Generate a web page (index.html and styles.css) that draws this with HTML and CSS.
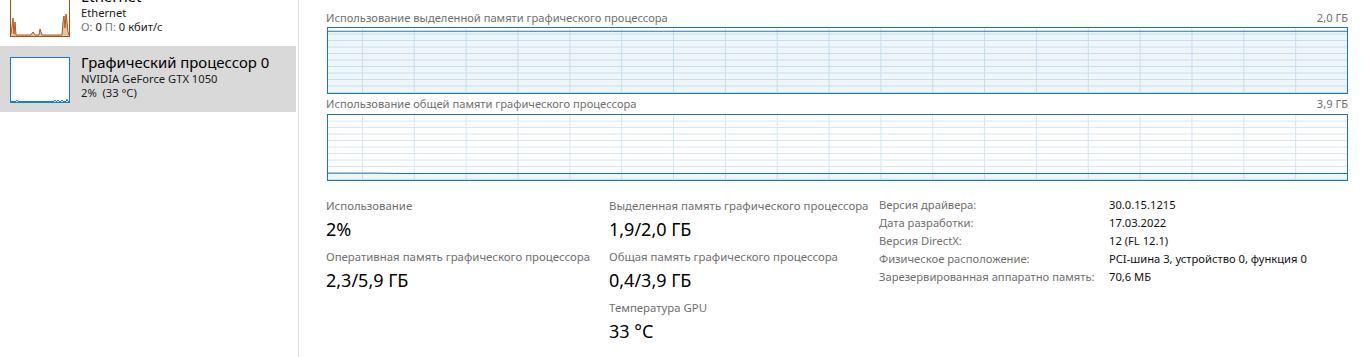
FILE: index.html
```html
<!DOCTYPE html>
<html lang="ru">
<head>
    <meta charset="UTF-8">
    <title>Диспетчер задач - Производительность</title>
    <link rel="stylesheet" href="styles.css">
</head>
<body>
<div class="app">

    <aside class="sidebar">
        <ul class="perf-list">
            <li class="perf-item">
                <div class="thumb thumb-net">
                    <svg viewBox="0 0 58 44" preserveAspectRatio="none">
                        <polygon class="net-fill" points="0,44 0,42 2,26 3,42 4,30 5,43 20,43 22,40 24,43 28,43 29,37 31,43 51,43 52,30 53,24 54,36 55,22 56,30 57,40 58,43 58,44"/>
                        <polyline class="net-line" points="0,42 2,26 3,42 4,30 5,43 20,43 22,40 24,43 28,43 29,37 31,43 51,43 52,30 53,24 54,36 55,22 56,30 57,40 58,43"/>
                    </svg>
                </div>
                <div class="perf-info">
                    <div class="perf-title">Ethernet</div>
                    <div class="perf-sub">Ethernet</div>
                    <div class="perf-stat"><span class="muted">О:</span> 0 <span class="muted">П:</span> 0 кбит/с</div>
                </div>
            </li>
            <li class="perf-item selected">
                <div class="thumb thumb-gpu">
                    <svg viewBox="0 0 58 44" preserveAspectRatio="none">
                        <polyline class="gpu-line" points="0,43.5 5,43.5 6,42 7,43.5 43,43.5 44,42 45,43.5 46,43.5 47,42 48,43.5 50,43.5 51,42 52,43.5 55,43.5 56,41.5 57,43.5 58,43.5"/>
                    </svg>
                </div>
                <div class="perf-info">
                    <div class="perf-title">Графический процессор 0</div>
                    <div class="perf-sub">NVIDIA GeForce GTX 1050</div>
                    <div class="perf-stat">2%&nbsp; (33 °C)</div>
                </div>
            </li>
        </ul>
    </aside>

    <main class="main">
        <div class="graph-head">
            <span>Использование выделенной памяти графического процессора</span>
            <span>2,0 ГБ</span>
        </div>
        <div class="graph">
            <svg class="graph-data" viewBox="0 0 100 100" preserveAspectRatio="none">
                <polygon class="data-fill" points="0,100 0,5 100,5 100,100"/>
                <polyline class="data-line" points="0,5 100,5"/>
            </svg>
        </div>

        <div class="graph-head second">
            <span>Использование общей памяти графического процессора</span>
            <span>3,9 ГБ</span>
        </div>
        <div class="graph">
            <svg class="graph-data" viewBox="0 0 100 100" preserveAspectRatio="none">
                <polygon class="data-fill" points="0,100 0,89.5 5,89.5 6.5,90 100,90 100,100"/>
                <polyline class="data-line" points="0,89.5 5,89.5 6.5,90 100,90"/>
            </svg>
        </div>

        <div class="stats">
            <div class="stat-col">
                <div class="stat-label">Использование</div>
                <div class="stat-value">2%</div>
                <div class="stat-label">Оперативная память графического процессора</div>
                <div class="stat-value">2,3/5,9 ГБ</div>
            </div>
            <div class="stat-col">
                <div class="stat-label">Выделенная память графического процессора</div>
                <div class="stat-value">1,9/2,0 ГБ</div>
                <div class="stat-label">Общая память графического процессора</div>
                <div class="stat-value">0,4/3,9 ГБ</div>
                <div class="stat-label">Температура GPU</div>
                <div class="stat-value">33 °C</div>
            </div>
            <dl class="props">
                <dt>Версия драйвера:</dt>
                <dd>30.0.15.1215</dd>
                <dt>Дата разработки:</dt>
                <dd>17.03.2022</dd>
                <dt>Версия DirectX:</dt>
                <dd>12 (FL 12.1)</dd>
                <dt>Физическое расположение:</dt>
                <dd>PCI-шина 3, устройство 0, функция 0</dd>
                <dt>Зарезервированная аппаратно память:</dt>
                <dd>70,6 МБ</dd>
            </dl>
        </div>
    </main>

</div>
</body>
</html>
```

FILE: styles.css
```css
* {
    box-sizing: border-box;
}
body {
    margin: 0;
    font-family: "Noto Sans", "Segoe UI", sans-serif;
    background-color: #ffffff;
    color: #000000;
    overflow: hidden;
}
.app {
    display: flex;
    height: 357px;
}

/* left list */
.sidebar {
    width: 299px;
    flex: none;
    border-right: 1px solid #e1e1e1;
    overflow: hidden;
}
.perf-list {
    list-style: none;
    margin: -20px 0 0;
    padding: 0;
}
.perf-item {
    display: flex;
    gap: 11px;
    width: 296px;
    height: 66px;
    padding: 10px;
}
.perf-item.selected {
    background-color: #d9d9d9;
}
.thumb {
    width: 60px;
    height: 46px;
    flex: none;
    margin-top: 1px;
    border: 1px solid;
    background-color: #ffffff;
}
.thumb svg {
    display: block;
    width: 100%;
    height: 100%;
}
.thumb-net {
    border-color: #a7520f;
}
.net-fill {
    fill: rgba(167, 82, 15, 0.35);
}
.net-line {
    fill: none;
    stroke: #b0561a;
    stroke-width: 1;
}
.thumb-gpu {
    border-color: #1b7dc2;
}
.gpu-line {
    fill: none;
    stroke: #1b7dc2;
    stroke-width: 1;
}
.perf-info {
    margin-top: -4px;
}
.perf-title {
    font-size: 14.9px;
    line-height: 20px;
    color: #000000;
}
.perf-sub,
.perf-stat {
    font-size: 11.2px;
    line-height: 14px;
    color: #1a1a1a;
}
.muted {
    color: #6e7883;
}

/* right panel */
.main {
    flex: 1;
    padding: 10px 13px 0 28px;
}
.graph-head {
    display: flex;
    justify-content: space-between;
    margin-left: -1px;
    font-size: 11.15px;
    line-height: 16px;
    color: #6f6f6f;
    margin-bottom: 1px;
}
.graph-head.second {
    margin-top: 2px;
    margin-bottom: 2px;
}
.graph {
    position: relative;
    height: 67px;
    border: 1px solid #1f76b6;
    background-color: #ffffff;
    background-image:
        linear-gradient(to top, #d5e5f1 1px, transparent 1px),
        linear-gradient(90deg, #d5e5f1 1px, transparent 1px);
    background-size: 100% 10%, 51.85px 100%;
    background-position: 0 0, right 0;
}
.graph-data {
    position: absolute;
    inset: 0;
    width: 100%;
    height: 100%;
}
.data-fill {
    fill: rgba(17, 125, 187, 0.07);
}
.data-line {
    fill: none;
    stroke: #1f76b6;
    stroke-width: 1;
    vector-effect: non-scaling-stroke;
}

.stats {
    display: grid;
    grid-template-columns: 283px 270px 1fr;
    align-items: start;
    margin: 17px 0 0 -1px;
}
.stat-label {
    font-size: 11.4px;
    line-height: 16px;
    color: #6f6f6f;
}
.stat-value {
    font-size: 18px;
    line-height: 24px;
    margin: 3px 0 8px;
    color: #000000;
}
.props {
    display: grid;
    grid-template-columns: 230px 1fr;
    align-content: start;
    margin: -2px 0 0;
    font-size: 11.2px;
    line-height: 18px;
}
.props dt {
    color: #6f6f6f;
}
.props dd {
    margin: 0;
    color: #111111;
}
```
